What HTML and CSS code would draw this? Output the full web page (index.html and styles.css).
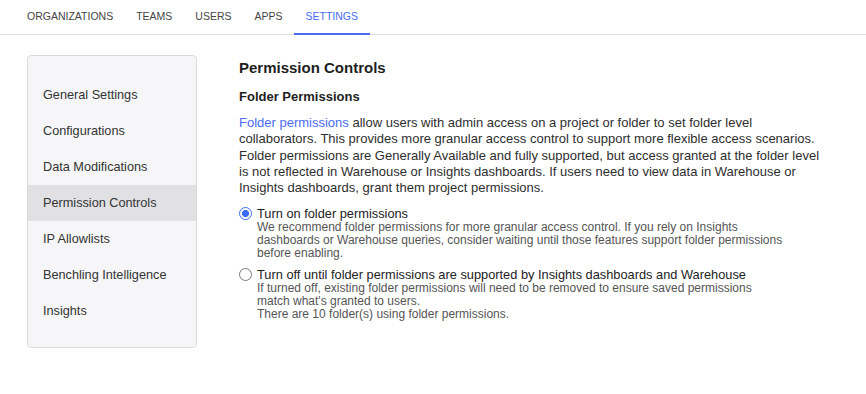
FILE: index.html
```html
<!DOCTYPE html>
<html>
<head>
<meta charset="utf-8">
<link rel="stylesheet" href="styles.css">
</head>
<body>
<nav class="tabs">
  <a class="tab">ORGANIZATIONS</a>
  <a class="tab">TEAMS</a>
  <a class="tab">USERS</a>
  <a class="tab">APPS</a>
  <a class="tab active">SETTINGS</a>
</nav>
<div class="page">
  <aside class="sidebar">
    <div class="item">General Settings</div>
    <div class="item">Configurations</div>
    <div class="item">Data Modifications</div>
    <div class="item active">Permission Controls</div>
    <div class="item">IP Allowlists</div>
    <div class="item">Benchling Intelligence</div>
    <div class="item">Insights</div>
  </aside>
  <main class="content">
    <h1 class="title">Permission Controls</h1>
    <h2 class="subtitle">Folder Permissions</h2>
    <p class="desc"><a class="link">Folder permissions</a> allow users with admin access on a project or folder to set folder level<br>collaborators. This provides more granular access control to support more flexible access scenarios.<br>Folder permissions are Generally Available and fully supported, but access granted at the folder level<br>is not reflected in Warehouse or Insights dashboards. If users need to view data in Warehouse or<br>Insights dashboards, grant them project permissions.</p>
    <div class="options">
      <label class="option">
        <span class="radio checked"></span>
        <span class="opt-text">
          <span class="opt-label">Turn on folder permissions</span>
          <span class="opt-help">We recommend folder permissions for more granular access control. If you rely on Insights<br>dashboards or Warehouse queries, consider waiting until those features support folder permissions<br>before enabling.</span>
        </span>
      </label>
      <label class="option">
        <span class="radio"></span>
        <span class="opt-text">
          <span class="opt-label">Turn off until folder permissions are supported by Insights dashboards and Warehouse</span>
          <span class="opt-help">If turned off, existing folder permissions will need to be removed to ensure saved permissions<br>match what's granted to users.</span>
          <span class="opt-help">There are 10 folder(s) using folder permissions.</span>
        </span>
      </label>
    </div>
  </main>
</div>
</body>
</html>
```
FILE: styles.css
```css
* { box-sizing: border-box; }
body {
  margin: 0;
  font-family: "Liberation Sans", Arial, sans-serif;
  color: #2b2b2b;
  background: #fff;
}
.tabs {
  display: flex;
  padding-left: 15px;
  height: 35px;
  border-bottom: 1px solid #dedede;
}
.tab {
  display: flex;
  align-items: center;
  padding: 0 11.5px 2px;
  font-size: 10.5px;
  color: #444;
  border-bottom: 2px solid transparent;
  margin-bottom: -1px;
}
.tab:first-child { padding-left: 12px; }
.tab.active {
  color: #4a6bf2;
  border-bottom-color: #4a6bf2;
}
.page {
  display: flex;
  padding: 20px 0 0 27px;
  gap: 42px;
}
.sidebar {
  width: 170px;
  flex: none;
  background: #f6f6f8;
  border: 1px solid #dcdcdf;
  border-radius: 4px;
  padding: 21px 0 18px;
}
.item {
  height: 36px;
  display: flex;
  align-items: center;
  padding-left: 15px;
  font-size: 12.7px;
  color: #333;
}
.item.active { background: #e1e1e4; }
.content {
  flex: 1;
  padding: 4px 20px 0 0;
}
.title {
  margin: 0;
  font-size: 15px;
  font-weight: 700;
  color: #1e1e1e;
  line-height: 18px;
}
.subtitle {
  margin: 12px 0 0;
  font-size: 13px;
  font-weight: 700;
  color: #1e1e1e;
  line-height: 16px;
}
.desc {
  margin: 10px 0 0;
  font-size: 13px;
  line-height: 16.3px;
  color: #2e2e2e;
}
.link { color: #4a6bf2; }
.options {
  margin-top: 10px;
  display: flex;
  flex-direction: column;
  gap: 7px;
}
.option {
  display: flex;
  gap: 5px;
  align-items: flex-start;
}
.radio {
  flex: none;
  width: 13px;
  height: 13px;
  border-radius: 50%;
  border: 1px solid #777;
  margin-top: 1px;
  background: #fff;
}
.radio.checked {
  border: 1.5px solid #3b6cf6;
  background: radial-gradient(circle, #3b6cf6 0 3.3px, #fff 3.8px);
}
.opt-text { display: flex; flex-direction: column; }
.opt-label {
  font-size: 12.8px;
  line-height: 15px;
  color: #222;
}
.opt-help {
  font-size: 12px;
  line-height: 13px;
  color: #555;
}
```
